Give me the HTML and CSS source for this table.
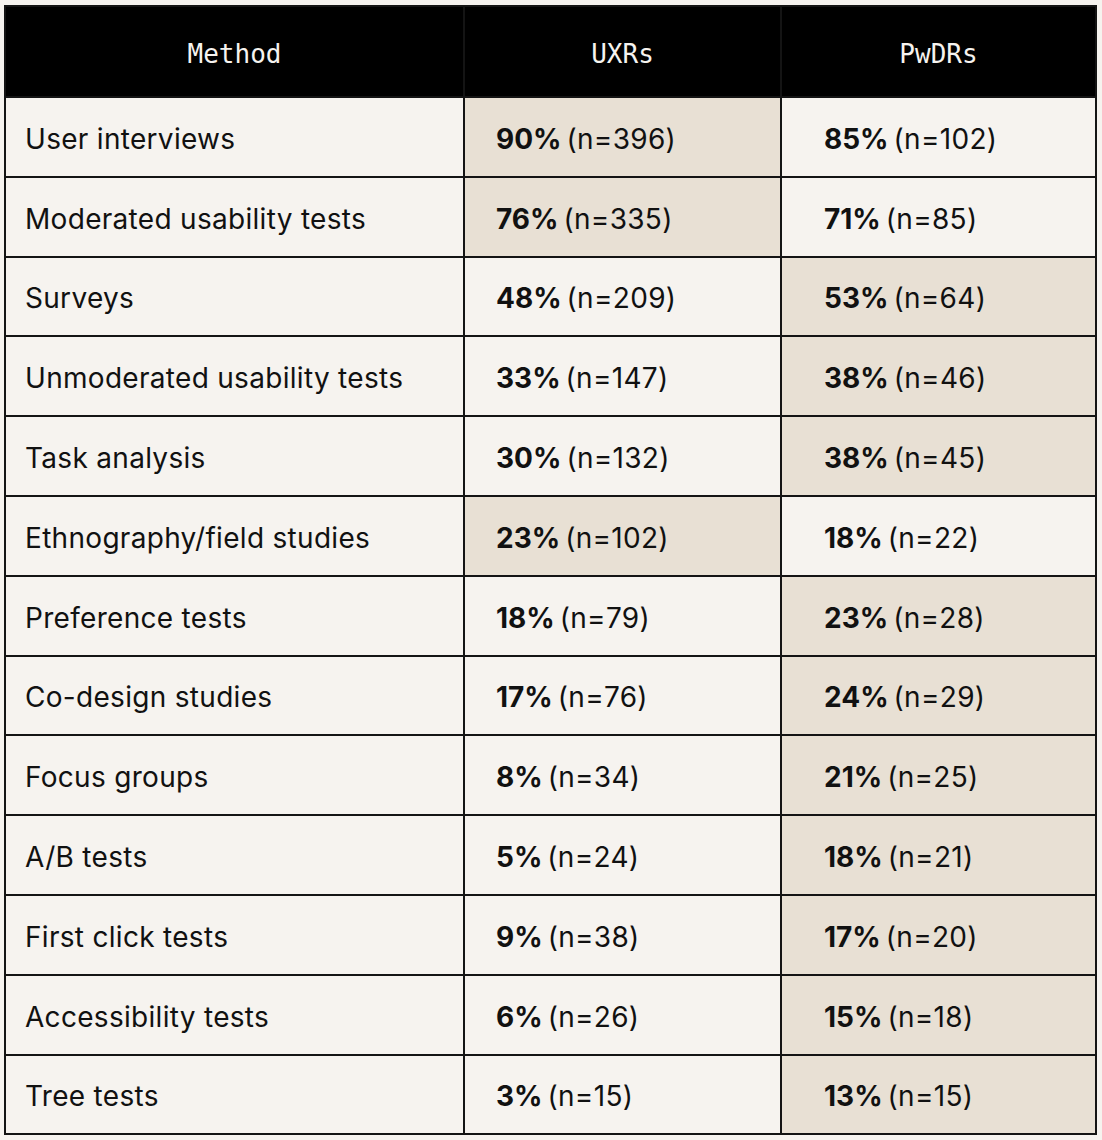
FILE: index.html
```html
<!DOCTYPE html>
<html>
<head>
<meta charset="utf-8">
<link rel="stylesheet" href="styles.css">
</head>
<body>
<div class="table">
  <div class="cell head">Method</div>
  <div class="cell head">UXRs</div>
  <div class="cell head">PwDRs</div>

  <div class="cell name">User interviews</div>
  <div class="cell c2 hi"><b>90%</b> (n=396)</div>
  <div class="cell c3"><b>85%</b> (n=102)</div>

  <div class="cell name">Moderated usability tests</div>
  <div class="cell c2 hi"><b>76%</b> (n=335)</div>
  <div class="cell c3"><b>71%</b> (n=85)</div>

  <div class="cell name">Surveys</div>
  <div class="cell c2"><b>48%</b> (n=209)</div>
  <div class="cell c3 hi"><b>53%</b> (n=64)</div>

  <div class="cell name">Unmoderated usability tests</div>
  <div class="cell c2"><b>33%</b> (n=147)</div>
  <div class="cell c3 hi"><b>38%</b> (n=46)</div>

  <div class="cell name">Task analysis</div>
  <div class="cell c2"><b>30%</b> (n=132)</div>
  <div class="cell c3 hi"><b>38%</b> (n=45)</div>

  <div class="cell name">Ethnography/field studies</div>
  <div class="cell c2 hi"><b>23%</b> (n=102)</div>
  <div class="cell c3"><b>18%</b> (n=22)</div>

  <div class="cell name">Preference tests</div>
  <div class="cell c2"><b>18%</b> (n=79)</div>
  <div class="cell c3 hi"><b>23%</b> (n=28)</div>

  <div class="cell name">Co-design studies</div>
  <div class="cell c2"><b>17%</b> (n=76)</div>
  <div class="cell c3 hi"><b>24%</b> (n=29)</div>

  <div class="cell name">Focus groups</div>
  <div class="cell c2"><b>8%</b> (n=34)</div>
  <div class="cell c3 hi"><b>21%</b> (n=25)</div>

  <div class="cell name">A/B tests</div>
  <div class="cell c2"><b>5%</b> (n=24)</div>
  <div class="cell c3 hi"><b>18%</b> (n=21)</div>

  <div class="cell name">First click tests</div>
  <div class="cell c2"><b>9%</b> (n=38)</div>
  <div class="cell c3 hi"><b>17%</b> (n=20)</div>

  <div class="cell name">Accessibility tests</div>
  <div class="cell c2"><b>6%</b> (n=26)</div>
  <div class="cell c3 hi"><b>15%</b> (n=18)</div>

  <div class="cell name">Tree tests</div>
  <div class="cell c2"><b>3%</b> (n=15)</div>
  <div class="cell c3 hi"><b>13%</b> (n=15)</div>
</div>
</body>
</html>
```
FILE: styles.css
```css
html, body {
  margin: 0;
  padding: 0;
  background: #f6f3ef;
}
body {
  padding: 5px 0 0 4px;
}
.table {
  display: grid;
  width: 1093px;
  box-sizing: border-box;
  grid-template-columns: 457px 315px 313px;
  grid-template-rows: 89px repeat(13, 77.8px);
  gap: 2px;
  padding: 2px;
  background: #141414;
  font-family: "Inter", "DejaVu Sans", sans-serif;
  font-size: 28px;
  letter-spacing: 0.3px;
  color: #111;
}
.cell {
  display: flex;
  align-items: center;
  background: #f6f3ef;
  white-space: nowrap;
  padding-top: 4px;
  box-sizing: border-box;
}
.cell b {
  font-weight: 700;
  margin-right: 5px;
  letter-spacing: 0;
}
.head {
  background: #000;
  color: #f6f3ef;
  justify-content: center;
  font-family: "DejaVu Sans Mono", monospace;
  font-size: 26px;
  letter-spacing: 0;
  padding-top: 4px;
}
.name {
  padding-left: 19px;
}
.c2 {
  padding-left: 31px;
}
.c3 {
  padding-left: 42px;
}
.hi {
  background: #e8e0d4;
}
```
